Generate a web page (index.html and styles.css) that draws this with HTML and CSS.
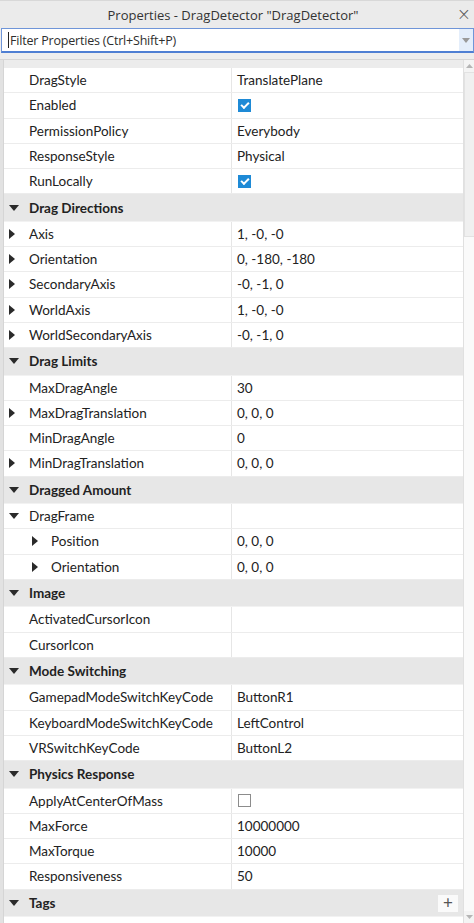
FILE: index.html
```html
<!DOCTYPE html>
<html>
<head>
<meta charset="utf-8">
<link rel="stylesheet" href="styles.css">
</head>
<body>
<div class="window">
  <div class="titlebar">
    <span class="title">Properties - DragDetector "DragDetector"</span>
    <span class="close">×</span>
  </div>
  <div class="filter">
    <span class="caret"></span>
    <span class="placeholder">Filter Properties (Ctrl+Shift+P)</span>
    <span class="dropdown"><svg width="8" height="5" viewBox="0 0 8 5"><path d="M0 0H8L4 5Z" fill="#9a9a9a"/></svg></span>
  </div>
  <div class="gap"></div>
  <div class="panel">
    <div class="gutter"></div>
    <div class="grid">
      <div class="topstrip"></div>

      <div class="row"><div class="name">DragStyle</div><div class="value">TranslatePlane</div></div>
      <div class="row"><div class="name">Enabled</div><div class="value"><span class="check on"></span></div></div>
      <div class="row"><div class="name">PermissionPolicy</div><div class="value">Everybody</div></div>
      <div class="row"><div class="name">ResponseStyle</div><div class="value">Physical</div></div>
      <div class="row"><div class="name">RunLocally</div><div class="value"><span class="check on"></span></div></div>

      <div class="section"><span class="tri down"></span>Drag Directions</div>
      <div class="row"><div class="name"><span class="tri right"></span>Axis</div><div class="value">1, -0, -0</div></div>
      <div class="row"><div class="name"><span class="tri right"></span>Orientation</div><div class="value">0, -180, -180</div></div>
      <div class="row"><div class="name"><span class="tri right"></span>SecondaryAxis</div><div class="value">-0, -1, 0</div></div>
      <div class="row"><div class="name"><span class="tri right"></span>WorldAxis</div><div class="value">1, -0, -0</div></div>
      <div class="row"><div class="name"><span class="tri right"></span>WorldSecondaryAxis</div><div class="value">-0, -1, 0</div></div>

      <div class="section"><span class="tri down"></span>Drag Limits</div>
      <div class="row"><div class="name">MaxDragAngle</div><div class="value">30</div></div>
      <div class="row"><div class="name"><span class="tri right"></span>MaxDragTranslation</div><div class="value">0, 0, 0</div></div>
      <div class="row"><div class="name">MinDragAngle</div><div class="value">0</div></div>
      <div class="row"><div class="name"><span class="tri right"></span>MinDragTranslation</div><div class="value">0, 0, 0</div></div>

      <div class="section"><span class="tri down"></span>Dragged Amount</div>
      <div class="row"><div class="name"><span class="tri down"></span>DragFrame</div><div class="value"></div></div>
      <div class="row"><div class="name sub"><span class="tri right"></span>Position</div><div class="value">0, 0, 0</div></div>
      <div class="row"><div class="name sub"><span class="tri right"></span>Orientation</div><div class="value">0, 0, 0</div></div>

      <div class="section"><span class="tri down"></span>Image</div>
      <div class="row"><div class="name">ActivatedCursorIcon</div><div class="value"></div></div>
      <div class="row"><div class="name">CursorIcon</div><div class="value"></div></div>

      <div class="section"><span class="tri down"></span>Mode Switching</div>
      <div class="row"><div class="name">GamepadModeSwitchKeyCode</div><div class="value">ButtonR1</div></div>
      <div class="row"><div class="name">KeyboardModeSwitchKeyCode</div><div class="value">LeftControl</div></div>
      <div class="row"><div class="name">VRSwitchKeyCode</div><div class="value">ButtonL2</div></div>

      <div class="section"><span class="tri down"></span>Physics Response</div>
      <div class="row"><div class="name">ApplyAtCenterOfMass</div><div class="value"><span class="check"></span></div></div>
      <div class="row"><div class="name">MaxForce</div><div class="value">10000000</div></div>
      <div class="row"><div class="name">MaxTorque</div><div class="value">10000</div></div>
      <div class="row"><div class="name">Responsiveness</div><div class="value">50</div></div>

      <div class="section"><span class="tri down"></span>Tags<span class="add">+</span></div>
    </div>
    <div class="scrollbar">
      <div class="arrow up"><svg width="7" height="4" viewBox="0 0 7 4"><path d="M0 4H7L3.5 0Z" fill="#b5b5b5"/></svg></div>
      <div class="track"><div class="thumb"></div></div>
      <div class="arrow dn"><svg width="7" height="4" viewBox="0 0 7 4"><path d="M0 0H7L3.5 4Z" fill="#b5b5b5"/></svg></div>
    </div>
  </div>
</div>
</body>
</html>
```

FILE: styles.css
```css
* { box-sizing: border-box; }
html, body { margin: 0; padding: 0; }
body {
  background: #f0f0f0;
  font-family: Lato, "Open Sans", sans-serif;
  color: #222;
  width: 474px;
  height: 923px;
  overflow: hidden;
}
.window {
  width: 474px;
  height: 923px;
  display: flex;
  flex-direction: column;
  background: #eeeeee;
}
.titlebar {
  height: 28px;
  flex: none;
  position: relative;
  display: flex;
  align-items: center;
  justify-content: center;
  background: #ebebeb;
  border-top: 1px solid #d8d8d8;
  font-family: "Open Sans", sans-serif;
  font-size: 13px;
  color: #333;
}
.title { margin-left: -8px; }
.close {
  position: absolute;
  right: 3px;
  top: 3px;
  font-size: 17px;
  color: #555;
  font-family: "DejaVu Sans", sans-serif;
  font-weight: 300;
}
.filter {
  height: 25px;
  flex: none;
  display: flex;
  align-items: center;
  background: #fff;
  border: 1px solid #6f95d8;
  border-bottom: 2px solid #4f7fd3;
  margin: 0 0 0 1px;
  font-family: "Open Sans", sans-serif;
  font-size: 12.5px;
  color: #2e2e2e;
  position: relative;
}
.caret {
  width: 1px;
  height: 16px;
  background: #222;
  margin-left: 6px;
}
.placeholder { margin-left: 1px; letter-spacing: -0.2px; }
.dropdown {
  margin-left: auto;
  width: 14px;
  align-self: stretch;
  background: #e4eefb;
  display: flex;
  align-items: center;
  justify-content: center;
}
.gap { height: 6px; flex: none; background: #eeeeee; }
.panel {
  flex: 1;
  display: flex;
  border-top: 1px solid #d6d6d6;
  overflow: hidden;
}
.gutter {
  width: 4px;
  flex: none;
  background: #e2e2e2;
  border-right: 1px solid #d5d5d5;
}
.grid {
  width: 459px;
  flex: none;
  display: flex;
  flex-direction: column;
  background: #fff;
}
.topstrip { height: 8px; flex: none; background: #ececec; }
.row {
  height: 25.25px;
  flex: none;
  display: flex;
  border-bottom: 1px solid #ececec;
  font-size: 13.5px;
}
.name {
  width: 228px;
  flex: none;
  display: flex;
  align-items: center;
  padding-left: 25px;
  border-right: 1px solid #e6e6e6;
  position: relative;
}
.name .tri { position: absolute; left: 5px; }
.name.sub { padding-left: 47px; }
.name.sub .tri { left: 28px; }
.value {
  flex: 1;
  display: flex;
  align-items: center;
  padding-left: 5px;
}
.section {
  height: 27.5px;
  flex: none;
  display: flex;
  align-items: center;
  background: #e7e7e7;
  font-weight: 700;
  font-size: 13.5px;
  padding-left: 25px;
  position: relative;
  border-bottom: 1px solid #f2f2f2;
}
.section .tri { position: absolute; left: 5px; }
.tri {
  width: 0;
  height: 0;
  display: inline-block;
}
.tri.right {
  border-top: 5px solid transparent;
  border-bottom: 5px solid transparent;
  border-left: 6px solid #2a2a2a;
}
.tri.down {
  border-left: 5px solid transparent;
  border-right: 5px solid transparent;
  border-top: 6px solid #2a2a2a;
}
.check {
  width: 13px;
  height: 13px;
  display: inline-block;
  border: 1px solid #8c8c8c;
  background: #fff;
  margin-left: 1px;
  position: relative;
}
.check.on {
  border: none;
  background: #1e8ad6;
}
.check.on::after {
  content: "";
  position: absolute;
  left: 3px;
  top: 3px;
  width: 6px;
  height: 3px;
  border-left: 2px solid #fff;
  border-bottom: 2px solid #fff;
  transform: rotate(-45deg);
}
.add {
  position: absolute;
  right: 5px;
  top: 5px;
  width: 20px;
  height: 17px;
  background: #fafafa;
  font-weight: 400;
  font-size: 17px;
  line-height: 16px;
  text-align: center;
  color: #555;
}
.scrollbar {
  flex: 1;
  display: flex;
  flex-direction: column;
  background: #fff;
  border-left: 1px solid #e0e0e0;
}
.arrow {
  height: 12px;
  flex: none;
  display: flex;
  align-items: center;
  justify-content: center;
  background: #f4f4f4;
}
.track {
  flex: 1;
  display: flex;
  flex-direction: column;
  background: #fafafa;
}
.thumb {
  margin-top: 0;
  height: 165px;
  background: #f0f0f0;
  border: 1px solid #e2e2e2;
  border-right: none;
}
```
